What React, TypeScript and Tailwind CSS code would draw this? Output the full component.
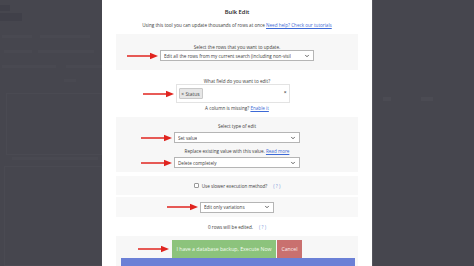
import { ChevronDown } from 'lucide-react';

const font = { fontFamily: '"Open Sans", "Liberation Sans", sans-serif' };

function Arrow() {
  return (
    <svg
      className="absolute right-[calc(100%+3px)] top-1/2 -translate-y-1/2"
      width="31"
      height="7"
      viewBox="0 0 31 7"
    >
      <line x1="0" y1="3.5" x2="25" y2="3.5" stroke="#e0241f" strokeWidth="1.3" />
      <polygon points="23,0.3 31,3.5 23,6.7" fill="#e0241f" />
    </svg>
  );
}

function Select({ label, width }: { label: string; width: string }) {
  return (
    <div className={`relative flex h-[11px] items-center justify-between border border-[#b5b5b5] bg-white pl-[3px] pr-[3px] ${width}`}>
      <Arrow />
      <span className="overflow-hidden whitespace-nowrap">{label}</span>
      <ChevronDown size={6} strokeWidth={3} className="shrink-0 text-[#333]" />
    </div>
  );
}

function Help() {
  return <span className="ml-[6px] text-[#7b97d8]">( ? )</span>;
}

function Backdrop({ side }: { side: 'left' | 'right' }) {
  if (side === 'right') {
    return (
      <div className="flex h-full w-[102px] shrink-0 flex-col border-l border-[#55555d] bg-[#46464e]">
        <div className="mt-[97px] flex gap-[30px] pl-[10px]">
          <div className="h-[4px] w-[8px] bg-[#4b4b53]" />
          <div className="h-[4px] w-[12px] bg-[#4b4b53]" />
        </div>
      </div>
    );
  }
  return (
    <div className="flex h-full w-[102px] shrink-0 flex-col bg-[#46464e]">
      <div className="mt-[5px] h-[6px] w-[10px] bg-[#404049]" />
      <div className="mt-[2px] h-[8px] w-[22px] bg-[#404049]" />
      <div className="mt-[14px] flex gap-[8px] pl-[2px]">
        <div className="h-[3px] w-[30px] bg-[#494951]" />
        <div className="h-[3px] w-[50px] bg-[#494951]" />
      </div>
      <div className="mt-[12px] flex gap-[6px] pl-[4px]">
        <div className="h-[3px] w-[28px] bg-[#494951]" />
        <div className="h-[3px] w-[56px] bg-[#494951]" />
      </div>
      <div className="mt-[12px] flex gap-[10px] pl-[2px]">
        <div className="h-[3px] w-[54px] bg-[#494951]" />
        <div className="h-[3px] w-[36px] bg-[#494951]" />
      </div>
      <div className="mt-[11px] ml-[64px] h-[3px] w-[12px] bg-[#494951]" />
      <div className="mt-[11px] ml-[6px] h-[62px] w-[96px] border border-[#4a4a52]" />
      <div className="ml-[12px] mt-[2px] h-[3px] w-[86px] bg-[#494951]" />
      <div className="mt-[6px] ml-[4px] flex-1 border border-[#4a4a52]" />
    </div>
  );
}

export default function App() {
  return (
    <div className="flex h-[266px] w-[474px] overflow-hidden bg-[#46464e]" style={font}>
      <Backdrop side="left" />

      <div className="flex h-full w-[270px] shrink-0 flex-col bg-white text-[4.6px] leading-[6px] text-[#3c3c3c]">
        <div className="pt-[9px] text-center text-[5.8px] font-semibold leading-[7px] text-[#222]">Bulk Edit</div>
        <div className="mt-[6px] text-center">
          Using this tool you can update thousands of rows at once{' '}
          <span className="text-[#3d6ad6] underline">Need help? Check our tutorials</span>
        </div>

        {/* rows to update */}
        <div className="mx-[14px] mt-[6px] flex h-[36px] flex-col items-center bg-[#f7f7f7] pt-[10px]">
          <div>Select the rows that you want to update.</div>
          <Select label="Edit all the rows from my current search (including non-visil" width="w-[154px]" />
        </div>

        {/* field */}
        <div className="mx-[14px] flex h-[47px] flex-col items-center pt-[8px]">
          <div>What field do you want to edit?</div>
          <div className="relative mr-[9px] flex h-[19px] w-[114px] items-start justify-between border border-[#e3e3e3] bg-white pl-[2px] pr-[2px] pt-[3px]">
            <Arrow />
            <span className="flex h-[11px] w-[24px] items-center justify-center rounded-[1px] border border-[#c9c9c9] bg-[#e6e6e6] text-[4.9px] text-[#444]">
              × Status
            </span>
            <span className="mt-[1px] text-[5px] font-bold text-[#555]">×</span>
          </div>
          <div className="mt-[2px]">
            A column is missing? <span className="text-[#3d6ad6] underline">Enable it</span>
          </div>
        </div>

        {/* type of edit */}
        <div className="mx-[14px] flex h-[55px] flex-col items-center bg-[#f7f7f7] pt-[6px]">
          <div>Select type of edit</div>
          <div className="mt-[3px]">
            <Select label="Set value" width="w-[126px]" />
          </div>
          <div className="mt-[5px]">
            Replace existing value with this value. <span className="text-[#3d6ad6] underline">Read more</span>
          </div>
          <div className="mt-[3px]">
            <Select label="Delete completely" width="w-[126px]" />
          </div>
        </div>

        {/* slower method */}
        <div className="mx-[14px] mt-[4px] flex h-[19px] items-center justify-center bg-[#f8f8f8]">
          <span className="mr-[3px] h-[5px] w-[5px] rounded-[1px] border border-[#9a9a9a] bg-white" />
          Use slower execution method?
          <Help />
        </div>

        {/* variations */}
        <div className="mx-[14px] mt-[2px] flex h-[20px] items-center justify-center bg-[#f8f8f8]">
          <Select label="Edit only variations" width="w-[74px]" />
        </div>

        <div className="flex h-[19px] items-center justify-center">
          0 rows will be edited.
          <Help />
        </div>

        {/* actions */}
        <div className="mx-[14px] flex flex-1 flex-col bg-[#f7f7f7] pt-[4px]">
          <div className="flex justify-center gap-[1px] text-[5.2px]">
            <div className="relative flex h-[18px] w-[104px] items-center justify-center whitespace-nowrap bg-[#8cc37c] text-[#f4fbf1]">
              <Arrow />
              I have a database backup, Execute Now
            </div>
            <div className="flex h-[18px] w-[25px] items-center justify-center bg-[#c9706f] text-[#fbeeee]">
              Cancel
            </div>
          </div>
          <div className="ml-[5px] mr-[3px] flex-1 bg-[#6b80d6]" />
        </div>
      </div>

      <Backdrop side="right" />
    </div>
  );
}
